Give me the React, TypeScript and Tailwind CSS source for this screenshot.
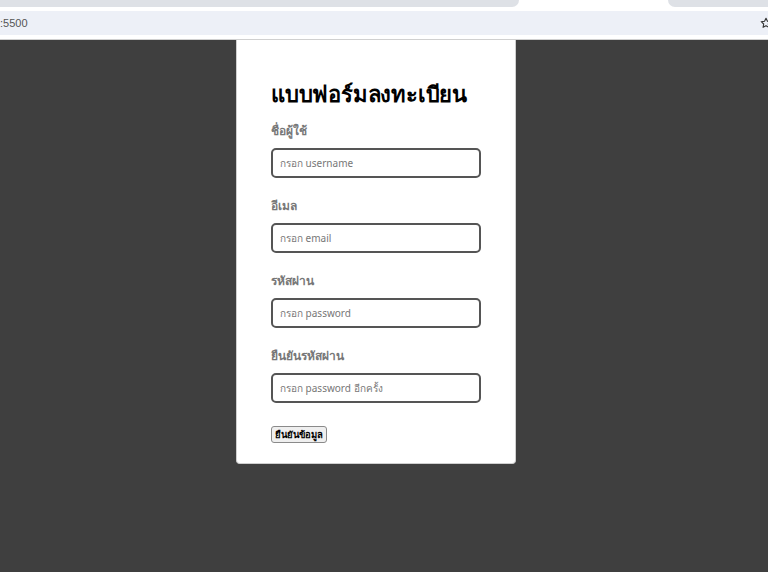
const font = { fontFamily: '"Noto Sans", "Liberation Sans", sans-serif' }

const fields = [
  { label: 'ชื่อผู้ใช้', placeholder: 'กรอก username', type: 'text' },
  { label: 'อีเมล', placeholder: 'กรอก email', type: 'email' },
  { label: 'รหัสผ่าน', placeholder: 'กรอก password', type: 'password' },
  { label: 'ยืนยันรหัสผ่าน', placeholder: 'กรอก password อีกครั้ง', type: 'password' },
]

export default function App() {
  return (
    <div className="w-[768px] h-[572px] overflow-hidden bg-[#3f3f3f] flex flex-col" style={font}>
      {/* browser chrome */}
      <div className="bg-white shrink-0">
        <div className="flex h-[7px]">
          <div className="w-[519px] bg-[#dee1e6] rounded-br-[8px]" />
          <div className="w-[149px] bg-white" />
          <div className="flex-1 bg-[#dee1e6] rounded-bl-[8px]" />
        </div>
        <div className="h-[4px]" />
        <div className="h-[24px] bg-[#edf0f7] flex items-center justify-between">
          <span className="text-[11px] text-[#555]" style={{ fontFamily: '"Liberation Sans", sans-serif' }}>:5500</span>
          <svg className="mr-[-4px]" width="12" height="12" viewBox="0 0 24 24" fill="none" stroke="#333" strokeWidth="2.2" strokeLinejoin="round">
            <path d="M12 2.5l2.9 6.1 6.6.8-4.9 4.6 1.3 6.6L12 17.3l-5.9 3.3 1.3-6.6-4.9-4.6 6.6-.8z" />
          </svg>
        </div>
        <div className="h-[4px]" />
      </div>

      {/* page */}
      <div className="flex-1 flex justify-center pr-[16px] border-t border-[#d0d0d0]">
        <div className="w-[280px] self-start bg-white rounded-b-[4px] border-x border-b border-[#cfcfcf] px-[34px] pt-[37px] pb-[20px]">
          <h1 className="text-[22px] leading-[32px] font-bold text-black whitespace-nowrap tracking-[-0.2px] mb-[14px]">แบบฟอร์มลงทะเบียน</h1>
          <form className="flex flex-col gap-[20px]" onSubmit={(e) => e.preventDefault()}>
            {fields.map((f) => (
              <div key={f.label} className="flex flex-col">
                <label className="text-[12px] leading-[16px] font-bold text-[#777] mb-[9px]">{f.label}</label>
                <input
                  type={f.type}
                  placeholder={f.placeholder}
                  className="h-[30px] w-[210px] border-2 border-[#555] rounded-[5px] px-[7px] text-[10px] text-black placeholder:text-[#777] outline-none"
                />
              </div>
            ))}
            <div className="flex pt-[3px]">
              <button
                type="submit"
                className="h-[17px] px-[3px] text-[9.5px] leading-[14px] font-semibold text-black bg-[#efefef] border border-[#8a8a8a] rounded-[3px]"
              >
                ยืนยันข้อมูล
              </button>
            </div>
          </form>
        </div>
      </div>
    </div>
  )
}
